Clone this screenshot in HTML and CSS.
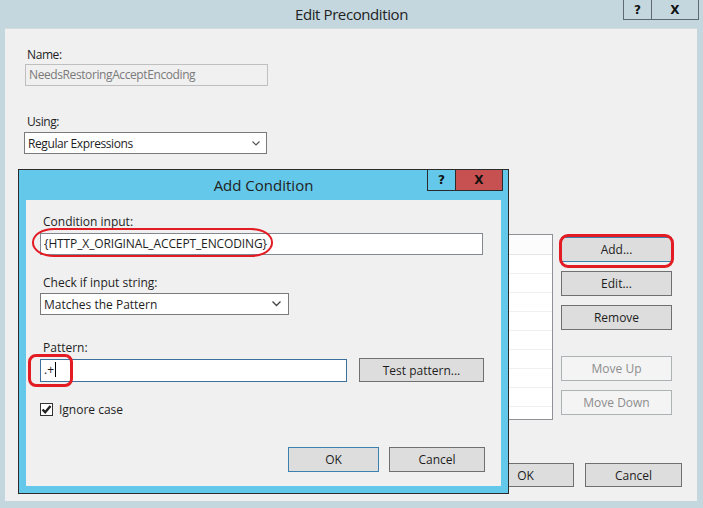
FILE: index.html
```html
<!DOCTYPE html>
<html lang="en">

<head>
    <meta charset="UTF-8">
    <title>Edit Precondition</title>
    <link rel="stylesheet" href="styles.css">
</head>

<body>
    <div class="screen">
        <!-- Fenêtre principale -->
        <div class="window">
            <div class="titlebar">
                <span class="title">Edit Precondition</span>
                <div class="caption">
                    <span class="cap-btn help">?</span>
                    <span class="cap-btn close">X</span>
                </div>
            </div>

            <div class="client">
                <label class="label">Name:</label>
                <div class="textbox disabled name-box">NeedsRestoringAcceptEncoding</div>

                <label class="label using-label">Using:</label>
                <div class="combo using-combo">
                    <span>Regular Expressions</span>
                    <svg class="chevron" width="8" height="5" viewBox="0 0 8 5"><path d="M0.5 0.5 L4 4 L7.5 0.5" fill="none" stroke="#555" stroke-width="1.2"/></svg>
                </div>

                <div class="conditions">
                    <div class="listbox">
                        <div class="list-head"></div>
                        <div class="list-row"></div>
                        <div class="list-row"></div>
                        <div class="list-row"></div>
                        <div class="list-row"></div>
                        <div class="list-row"></div>
                        <div class="list-row"></div>
                        <div class="list-row"></div>
                        <div class="list-row"></div>
                    </div>
                    <div class="side-buttons">
                        <button class="btn default">Add...</button>
                        <button class="btn">Edit...</button>
                        <button class="btn">Remove</button>
                        <button class="btn off move-up">Move Up</button>
                        <button class="btn off">Move Down</button>
                    </div>
                </div>

                <div class="footer">
                    <button class="btn wide">OK</button>
                    <button class="btn wide">Cancel</button>
                </div>
            </div>
        </div>

        <!-- Boîte de dialogue par-dessus -->
        <div class="dialog">
            <div class="dlg-title">
                <span class="title small">Add Condition</span>
                <div class="caption dlg-caption">
                    <span class="cap-btn help">?</span>
                    <span class="cap-btn close red">X</span>
                </div>
            </div>
            <div class="dlg-client">
                <label class="label">Condition input:</label>
                <div class="textbox cond-box">{HTTP_X_ORIGINAL_ACCEPT_ENCODING}</div>

                <label class="label check-label">Check if input string:</label>
                <div class="combo match-combo">
                    <span>Matches the Pattern</span>
                    <svg class="chevron" width="9" height="6" viewBox="0 0 9 6"><path d="M0.5 0.5 L4.5 4.5 L8.5 0.5" fill="none" stroke="#444" stroke-width="1.3"/></svg>
                </div>

                <label class="label pattern-label">Pattern:</label>
                <div class="pattern-row">
                    <div class="textbox focused pattern-box">.+<span class="caret"></span></div>
                    <button class="btn test-btn">Test pattern...</button>
                </div>

                <div class="checkrow">
                    <span class="checkbox">
                        <svg width="11" height="11" viewBox="0 0 11 11"><path d="M1.5 5.5 L4.2 8.2 L9.5 2" fill="none" stroke="#222" stroke-width="2.4"/></svg>
                    </span>
                    <span>Ignore case</span>
                </div>

                <div class="dlg-footer">
                    <button class="btn default ok">OK</button>
                    <button class="btn cancel">Cancel</button>
                </div>
            </div>
        </div>

        <!-- Annotations rouges -->
        <div class="mark mark-cond"></div>
        <div class="mark mark-pattern"></div>
        <div class="mark mark-add"></div>
    </div>
</body>

</html>
```

FILE: styles.css
```css
body {
    margin: 0;
    font-family: 'Open Sans', 'Noto Sans', sans-serif;
    font-size: 12px;
    color: #1e1e1e;
    background-color: #c4d7df;
}

.screen {
    position: relative;
    width: 703px;
    height: 508px;
    overflow: hidden;
}

/* Fenêtre principale */
.window {
    width: 703px;
    height: 508px;
}

.titlebar {
    position: relative;
    height: 28px;
    text-align: center;
}

.title {
    display: inline-block;
    font-size: 15px;
    line-height: 28px;
    letter-spacing: -0.4px;
    color: #222;
}

.caption {
    position: absolute;
    top: -1px;
    right: 4px;
    display: flex;
}

.cap-btn {
    display: flex;
    align-items: center;
    justify-content: center;
    height: 19px;
    border: 1px solid #5d6a70;
    font-family: 'DejaVu Sans', sans-serif;
    font-weight: bold;
    font-size: 12px;
    color: #111;
}

.cap-btn.help {
    width: 27px;
}

.cap-btn.close {
    width: 46px;
    border-left: none;
}

.client {
    display: flex;
    flex-direction: column;
    align-items: flex-start;
    margin: 0 6px 0 5px;
    height: 473px;
    padding: 18px 15px 0 20px;
    box-sizing: border-box;
    background: #f0f0f0;
    border-top: 1px solid #d6dde0;
}

.client .label,
.client .textbox,
.client .combo {
    letter-spacing: -0.4px;
}

.label {
    display: block;
    line-height: 15px;
    padding-left: 3px;
}

.client .label {
    padding-left: 2px;
}

.textbox {
    box-sizing: border-box;
    height: 22px;
    padding: 0 3px;
    line-height: 20px;
    background: #fff;
    border: 1px solid #828790;
    white-space: nowrap;
}

.textbox.disabled {
    background: #f0f0f0;
    border-color: #bfbfbf;
    color: #7a7a7a;
}

.textbox.focused {
    border-color: #3d6f9f;
}

.name-box {
    margin-top: 2px;
    width: 243px;
}

.using-label {
    margin-top: 28px;
}

.combo {
    box-sizing: border-box;
    display: flex;
    align-items: center;
    justify-content: space-between;
    height: 22px;
    padding: 0 6px 0 3px;
    background: #fff;
    border: 1px solid #7a7a7a;
}

.using-combo {
    margin-top: 3px;
    margin-left: -1px;
    width: 243px;
}

.conditions {
    display: flex;
    margin-top: 80px;
}

.listbox {
    width: 528px;
    height: 186px;
    box-sizing: border-box;
    background: #fff;
    border: 1px solid #8e9296;
}

.list-head {
    height: 19px;
    border-bottom: 1px solid #e5e5e5;
    background: #fcfcfc;
}

.list-row {
    height: 18px;
    border-bottom: 1px solid #f0f0f0;
}

.side-buttons {
    display: flex;
    flex-direction: column;
    gap: 9px;
    margin-left: 8px;
    padding-top: 3px;
}

.btn {
    box-sizing: border-box;
    width: 111px;
    height: 25px;
    padding: 0;
    font-family: inherit;
    font-size: 12px;
    color: #1e1e1e;
    background: #dddddd;
    border: 1px solid #707070;
}

.btn.default {
    border-color: #3c7fb1;
}

.btn.off {
    background: #f4f4f4;
    border-color: #adb2b5;
    color: #8d8d8d;
}

.btn.move-up {
    margin-top: 17px;
}

.footer {
    display: flex;
    gap: 11px;
    align-self: flex-end;
    margin-top: 43px;
}

.btn.wide {
    width: 97px;
    height: 24px;
}

/* Boîte de dialogue "Add Condition" */
.dialog {
    position: absolute;
    left: 18px;
    top: 169px;
    width: 491px;
    height: 325px;
    box-sizing: border-box;
    border: 1px solid #2b2b2b;
    background: #63c8e9;
    padding: 0 7px 7px;
}

.dlg-title {
    position: relative;
    height: 30px;
    text-align: center;
}

.title.small {
    line-height: 30px;
    letter-spacing: 0;
}

.dlg-caption {
    top: -1px;
    right: -2px;
}

.dlg-caption .cap-btn {
    height: 20px;
    border-color: #2b2b2b;
}

.cap-btn.red {
    background: #c75050;
}

.dlg-client {
    display: flex;
    flex-direction: column;
    align-items: flex-start;
    height: 286px;
    box-sizing: border-box;
    padding: 14px 16px 0 14px;
    background: #f0f0f0;
}

.cond-box {
    margin-top: 4px;
    width: 443px;
    letter-spacing: -0.12px;
}

.check-label {
    margin-top: 20px;
}

.match-combo {
    margin-top: 3px;
    width: 249px;
    padding-right: 7px;
}

.pattern-label {
    margin-top: 25px;
}

.pattern-row {
    display: flex;
    align-items: center;
    gap: 12px;
    margin-top: 3px;
}

.pattern-box {
    width: 307px;
    height: 23px;
}

.caret {
    display: inline-block;
    width: 1px;
    height: 15px;
    margin-left: 1px;
    vertical-align: -3px;
    background: #000;
}

.test-btn {
    width: 125px;
    height: 24px;
}

.checkrow {
    display: flex;
    align-items: center;
    gap: 6px;
    margin-top: 20px;
    line-height: 15px;
}

.checkbox {
    display: flex;
    align-items: center;
    justify-content: center;
    width: 13px;
    height: 13px;
    box-sizing: border-box;
    background: #fff;
    border: 1px solid #333;
}

.dlg-footer {
    display: flex;
    gap: 10px;
    align-self: flex-end;
    margin-top: 30px;
}

.btn.ok {
    width: 91px;
}

.btn.cancel {
    width: 96px;
}

/* Annotations */
.mark {
    position: absolute;
    box-sizing: border-box;
    border: 2px solid #e31b23;
}

.mark-cond {
    left: 32px;
    top: 228px;
    width: 241px;
    height: 29px;
    border-radius: 22px / 14px;
}

.mark-pattern {
    left: 28px;
    top: 354px;
    width: 45px;
    height: 33px;
    border-width: 3px;
    border-radius: 8px;
}

.mark-add {
    left: 559px;
    top: 234px;
    width: 115px;
    height: 34px;
    border-width: 3px;
    border-radius: 9px;
}
```
